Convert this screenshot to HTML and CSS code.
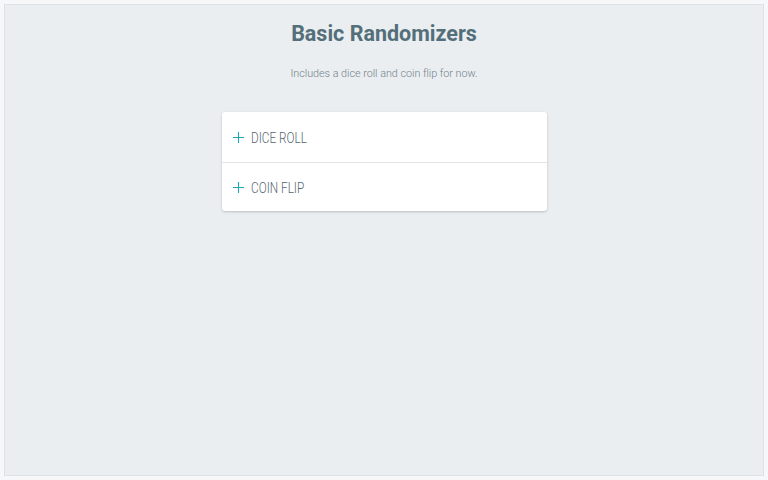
FILE: index.html
```html
<!DOCTYPE html>
<html>
<head>
<meta charset="utf-8">
<link rel="stylesheet" href="styles.css">
</head>
<body>
<div class="frame">
  <h1 class="title">Basic Randomizers</h1>
  <p class="subtitle">Includes a dice roll and coin flip for now.</p>
  <div class="card">
    <div class="row">
      <svg class="plus" width="11" height="11" viewBox="0 0 11 11"><path d="M0 5.5H11M5.5 0V11" stroke="#22a5b6" stroke-width="1.1"/></svg>
      <span class="label">DICE ROLL</span>
    </div>
    <div class="row">
      <svg class="plus" width="11" height="11" viewBox="0 0 11 11"><path d="M0 5.5H11M5.5 0V11" stroke="#22a5b6" stroke-width="1.1"/></svg>
      <span class="label">COIN FLIP</span>
    </div>
  </div>
</div>
</body>
</html>
```
FILE: styles.css
```css
html, body {
  margin: 0;
  padding: 0;
  background: #f6f7f8;
}
body {
  padding: 4px;
  height: 480px;
  box-sizing: border-box;
}
.frame {
  box-sizing: border-box;
  height: 472px;
  border: 1px solid #dde1e4;
  background: #eaeef1;
  display: flex;
  flex-direction: column;
  align-items: center;
  font-family: Roboto, "Liberation Sans", sans-serif;
}
.title {
  margin: 16px 0 0 0;
  font-size: 21.5px;
  font-weight: 700;
  color: #546e7a;
  line-height: 26px;
}
.subtitle {
  margin: 20px 0 0 0;
  font-size: 10.75px;
  font-weight: 300;
  color: #72828b;
  line-height: 14px;
}
.card {
  margin-top: 31px;
  width: 325px;
  background: #ffffff;
  border-radius: 3px;
  box-shadow: 0 1px 3px rgba(0,0,0,0.12), 0 1px 2px rgba(0,0,0,0.08);
}
.row {
  height: 49.5px;
  box-sizing: border-box;
  padding-top: 2px;
  display: flex;
  align-items: center;
  padding-left: 11px;
}
.row + .row {
  border-top: 1px solid #e0e4e6;
}
.plus {
  flex: none;
  margin-right: 7px;
}
.label {
  display: inline-block;
  font-family: Roboto, "Liberation Sans", sans-serif;
  font-weight: 300;
  font-size: 15.5px;
  color: #55666f;
  transform: scaleX(0.76);
  transform-origin: left center;
  white-space: nowrap;
}
```
